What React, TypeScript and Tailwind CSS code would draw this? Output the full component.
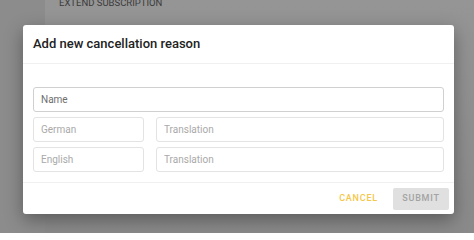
import React from "react";

const font = { fontFamily: "Roboto, 'Liberation Sans', sans-serif" };

const Field = ({
  placeholder,
  dark = false,
  className = "",
}: {
  placeholder: string;
  dark?: boolean;
  className?: string;
}) => (
  <input
    placeholder={placeholder}
    className={`h-[25px] rounded-[3px] border bg-white px-[7px] text-[10px] outline-none ${
      dark
        ? "border-[#d0d0d0] placeholder:text-[#6e6e6e]"
        : "border-[#e3e3e3] placeholder:text-[#a9a9a9]"
    } ${className}`}
  />
);

const App = () => {
  return (
    <div className="relative h-[233px] w-[474px] overflow-hidden bg-[#8c8c8c]" style={font}>
      {/* page behind the overlay */}
      <div className="flex h-full pl-[45px]">
        <div className="flex-1 bg-gradient-to-b from-[#959595] to-[#8a8a8a]">
          <div className="-mt-[3px] px-[14px] text-[9.5px] uppercase leading-[12px] text-[#3b3b3b]">
            Extend subscription
          </div>
        </div>
      </div>

      {/* dialog */}
      <div className="absolute left-[23px] top-[25px] flex w-[431px] flex-col rounded-[3px] bg-white shadow-[0_6px_18px_rgba(0,0,0,0.35)]">
        <div className="flex h-[39px] items-center border-b border-[#f0f0f0] px-[10px]">
          <h2 className="text-[13px] font-medium text-[#222222]">Add new cancellation reason</h2>
        </div>

        <div className="flex flex-col gap-[5px] px-[10px] pb-[10px] pt-[23px]">
          <Field placeholder="Name" dark className="w-full" />
          <div className="flex gap-[12px]">
            <Field placeholder="German" className="w-[111px]" />
            <Field placeholder="Translation" className="flex-1" />
          </div>
          <div className="flex gap-[12px]">
            <Field placeholder="English" className="w-[111px]" />
            <Field placeholder="Translation" className="flex-1" />
          </div>
        </div>

        <div className="flex h-[32px] items-center justify-end gap-[7px] border-t border-[#f0f0f0] pr-[5px]">
          <button className="px-[8px] text-[9px] font-medium uppercase tracking-[0.8px] text-[#f5c748]">
            Cancel
          </button>
          <button className="h-[22px] w-[56px] rounded-[2px] bg-[#e0e0e0] text-[9px] font-medium uppercase tracking-[0.8px] text-[#a3a3a3]">
            Submit
          </button>
        </div>
      </div>
    </div>
  );
};

export default App;
